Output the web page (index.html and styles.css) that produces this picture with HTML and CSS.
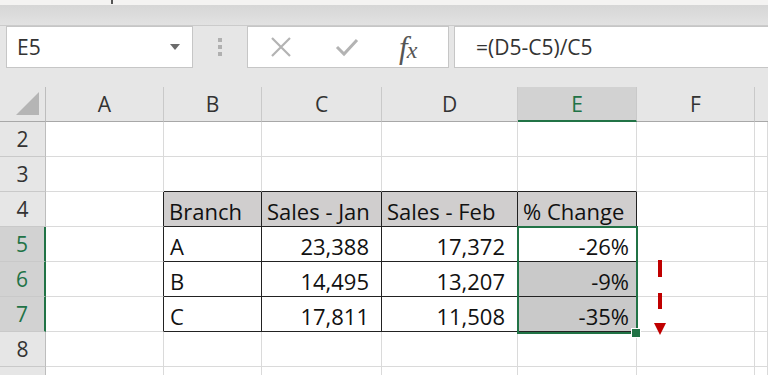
FILE: index.html
```html
<!DOCTYPE html>
<html>
<head>
<meta charset="utf-8">
<link rel="stylesheet" href="styles.css">
</head>
<body>
<div class="app">
  <div class="topstrip"><span class="tick"></span></div>
  <div class="ribbon-edge"></div>
  <div class="fbar">
    <div class="namebox">
      <span class="ref">E5</span>
      <svg class="caret" width="10" height="6" viewBox="0 0 10 6"><path d="M0 0h10L5 6z" fill="#6b6b6b"/></svg>
    </div>
    <div class="grip"><span></span><span></span><span></span></div>
    <div class="btns">
      <svg class="btn-ic" width="22" height="22" viewBox="0 0 22 22"><path d="M2 2L20 20M20 2L2 20" stroke="#b3b3b3" stroke-width="2.2" fill="none"/></svg>
      <svg class="btn-ic" width="24" height="22" viewBox="0 0 24 22"><path d="M2 11L9 18L22 4" stroke="#b3b3b3" stroke-width="3" fill="none"/></svg>
      <span class="fx">f<i>x</i></span>
    </div>
    <div class="formula">=(D5-C5)/C5</div>
  </div>
  <div class="gap"></div>
  <div class="sheet">
    <div class="corner"><svg width="24" height="24" viewBox="0 0 24 24"><path d="M23 0V23H0z" fill="#b5b5b5"/></svg></div>
    <div class="ch">A</div>
    <div class="ch">B</div>
    <div class="ch">C</div>
    <div class="ch">D</div>
    <div class="ch sel">E</div>
    <div class="ch">F</div>
    <div class="ch last"></div>

    <div class="rh">2</div>
    <div class="c"></div><div class="c"></div><div class="c"></div><div class="c"></div><div class="c"></div><div class="c"></div><div class="c"></div>

    <div class="rh">3</div>
    <div class="c"></div><div class="c abv"></div><div class="c abv"></div><div class="c abv"></div><div class="c abv"></div><div class="c"></div><div class="c"></div>

    <div class="rh">4</div>
    <div class="c lft"></div>
    <div class="c t th">Branch</div>
    <div class="c t th">Sales - Jan</div>
    <div class="c t th">Sales - Feb</div>
    <div class="c t th">% Change</div>
    <div class="c"></div><div class="c"></div>

    <div class="rh hl">5</div>
    <div class="c lft"></div>
    <div class="c t">A</div>
    <div class="c t num">23,388</div>
    <div class="c t num">17,372</div>
    <div class="c t pct">-26%</div>
    <div class="c"></div><div class="c"></div>

    <div class="rh hl">6</div>
    <div class="c lft"></div>
    <div class="c t">B</div>
    <div class="c t num">14,495</div>
    <div class="c t num">13,207</div>
    <div class="c t pct shade">-9%</div>
    <div class="c"></div><div class="c"></div>

    <div class="rh hl">7</div>
    <div class="c lft"></div>
    <div class="c t">C</div>
    <div class="c t num">17,811</div>
    <div class="c t num">11,508</div>
    <div class="c t pct shade">-35%</div>
    <div class="c"></div><div class="c"></div>

    <div class="rh">8</div>
    <div class="c"></div><div class="c"></div><div class="c"></div><div class="c"></div><div class="c"></div><div class="c"></div><div class="c"></div>

    <div class="rh"></div>
    <div class="c"></div><div class="c"></div><div class="c"></div><div class="c"></div><div class="c"></div><div class="c"></div><div class="c"></div>

    <div class="selbox"></div>
    <div class="handle"></div>
    <svg class="arrow" width="20" height="80" viewBox="0 0 20 80"><path d="M10 2V19M10 35V51" stroke="#c00000" stroke-width="4" fill="none"/><path d="M4 65H16L10 77z" fill="#c00000"/></svg>
  </div>
</div>
</body>
</html>
```

FILE: styles.css
```css
* { box-sizing: border-box; }
html, body { margin: 0; padding: 0; }
body {
  width: 768px;
  height: 375px;
  overflow: hidden;
  background: #e6e6e6;
  font-family: "Open Sans", "Liberation Sans", sans-serif;
  color: #222;
}
.app { width: 768px; }
.topstrip {
  height: 5px;
  background: #f4f3f2;
  position: relative;
}
.tick {
  position: absolute;
  left: 111px;
  top: 0;
  width: 2px;
  height: 4px;
  background: #555;
}
.ribbon-edge {
  height: 21px;
  background: linear-gradient(#d6d6d6, #e2e2e2);
  border-bottom: 1px solid #cbcbcb;
}
.fbar {
  display: flex;
  align-items: stretch;
  height: 42px;
  padding-left: 6px;
}
.namebox {
  width: 187px;
  background: #fff;
  border: 1px solid #c6c6c6;
  display: flex;
  align-items: center;
  justify-content: space-between;
  padding: 0 12px 0 10px;
}
.ref { font-size: 21px; color: #333; }
.grip {
  width: 54px;
  display: flex;
  flex-direction: column;
  align-items: center;
  justify-content: center;
  gap: 3px;
}
.grip span { width: 4px; height: 4px; background: #b0b0b0; }
.btns {
  width: 202px;
  background: #fff;
  border: 1px solid #c6c6c6;
  display: flex;
  align-items: center;
  padding-left: 22px;
}
.btn-ic { margin-right: 43px; }
.btns .btn-ic:nth-child(2) { margin-right: 40px; }
.fx {
  font-family: "Liberation Serif", "DejaVu Serif", serif;
  font-style: italic;
  font-size: 31px;
  line-height: 1;
  color: #555;
  letter-spacing: -1px;
}
.fx i { font-size: 24px; }
.formula {
  margin-left: 5px;
  flex: 1;
  margin-right: -10px;
  background: #fff;
  border: 1px solid #c6c6c6;
  display: flex;
  align-items: center;
  padding-left: 21px;
  font-size: 21px;
  color: #333;
}
.gap { height: 19px; }

.sheet {
  position: relative;
  display: grid;
  grid-template-columns: 46px 118px 98px 120px 136px 119px 118px 1fr;
  grid-auto-rows: 35px;
  background: #fff;
  font-size: 22px;
}
.corner, .ch, .rh {
  background: #e6e6e6;
  display: flex;
  align-items: center;
  justify-content: center;
  color: #333;
  font-size: 21px;
}
.corner {
  border-right: 1px solid #bdbdbd;
  border-bottom: 1px solid #a8a8a8;
  align-items: flex-end;
  justify-content: flex-end;
  padding: 0 5px 5px 0;
}
.corner svg { display: block; }
.ch {
  border-right: 1px solid #c9c9c9;
  border-bottom: 1px solid #a8a8a8;
}
.ch.last { border-right: none; }
.ch.sel {
  background: #d2d2d2;
  color: #217346;
  border-bottom: 2px solid #217346;
}
.rh {
  border-right: 1px solid #bdbdbd;
  border-bottom: 1px solid #c9c9c9;
}
.rh.hl {
  background: #d2d2d2;
  color: #217346;
  border-right: 2px solid #217346;
}
.c {
  border-right: 1px solid #dadada;
  border-bottom: 1px solid #dadada;
  display: flex;
  align-items: center;
  padding: 4px 6px 0 6px;
  color: #111;
  white-space: nowrap;
}
.c.abv { border-bottom-color: #222; }
.c.lft { border-right-color: #222; }
.c.t {
  border-right-color: #222;
  border-bottom-color: #222;
}
.c.th { background: #d0cece; padding-left: 5px; }
.c.num { justify-content: flex-end; padding-right: 12px; }
.c.pct { justify-content: flex-end; padding-right: 7px; }
.c.shade { background: #c9c9c9; }

.selbox {
  position: absolute;
  left: 517px;
  top: 139px;
  width: 121px;
  height: 108px;
  border: 2px solid #217346;
  pointer-events: none;
}
.handle {
  position: absolute;
  left: 632px;
  top: 242px;
  width: 8px;
  height: 8px;
  background: #217346;
  outline: 1px solid #fff;
}
.arrow {
  position: absolute;
  left: 650px;
  top: 171px;
}
```
